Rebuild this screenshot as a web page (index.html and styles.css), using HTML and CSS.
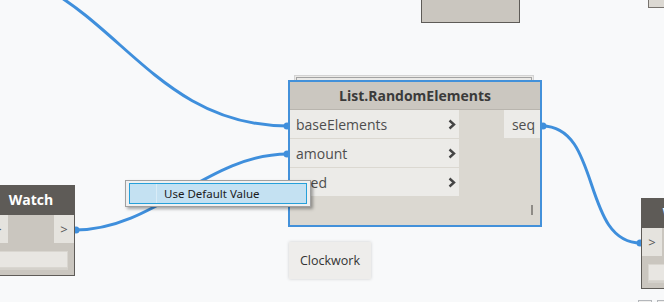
FILE: index.html
```html
<!DOCTYPE html>
<html lang="en">
<head>
    <meta charset="UTF-8">
    <meta name="viewport" content="width=device-width, initial-scale=1.0">
    <title>Workspace</title>
    <link rel="stylesheet" href="styles.css">
</head>
<body>
    <div class="canvas">
        <svg class="wires" width="664" height="302" viewBox="0 0 664 302">
            <path d="M-48 -36 C106 -36 134 126 288 126" />
            <path d="M75 230 C155 230 208 154 288 154" />
            <path d="M542 126 C602 126 581 243 641 243" />
            <circle cx="287" cy="126" r="3.5" />
            <circle cx="287" cy="154" r="3.5" />
            <circle cx="543" cy="126" r="3.5" />
            <circle cx="76" cy="230" r="3.5" />
            <circle cx="640" cy="243" r="3.5" />
        </svg>

        <!-- nodes cut by the view edges -->
        <div class="node-stub top-a"></div>
        <div class="node-stub top-b"></div>
        <div class="node-stub bottom-a"></div>
        <div class="node-stub bottom-b"></div>

        <div class="stack stack-1"></div>
        <div class="stack stack-2"></div>

        <div class="node random selected">
            <div class="node-title">List.RandomElements</div>
            <div class="node-ports">
                <div class="inputs">
                    <div class="port">
                        <span>baseElements</span>
                        <svg class="chevron" width="8" height="11" viewBox="0 0 8 11"><path d="M1.5 1.5 L6 5.5 L1.5 9.5" /></svg>
                    </div>
                    <div class="port">
                        <span>amount</span>
                        <svg class="chevron" width="8" height="11" viewBox="0 0 8 11"><path d="M1.5 1.5 L6 5.5 L1.5 9.5" /></svg>
                    </div>
                    <div class="port">
                        <span>seed</span>
                        <svg class="chevron" width="8" height="11" viewBox="0 0 8 11"><path d="M1.5 1.5 L6 5.5 L1.5 9.5" /></svg>
                    </div>
                </div>
                <div class="outputs">
                    <div class="port out">seq</div>
                </div>
            </div>
            <div class="lacing"></div>
        </div>

        <div class="node watch watch-left">
            <div class="watch-title">Watch</div>
            <div class="watch-row">
                <div class="watch-port">&gt;</div>
                <div class="watch-port">&gt;</div>
            </div>
            <div class="watch-box"></div>
        </div>

        <div class="node watch watch-right">
            <div class="watch-title">Watch</div>
            <div class="watch-row">
                <div class="watch-port">&gt;</div>
                <div class="watch-port">&gt;</div>
            </div>
            <div class="watch-box"></div>
        </div>

        <div class="group-label">Clockwork</div>

        <div class="context-menu">
            <div class="menu-item">
                <span class="menu-icon"></span>
                <span class="menu-text">Use Default Value</span>
            </div>
        </div>
    </div>
</body>
</html>
```

FILE: styles.css
```css
*, *::before, *::after {
    margin: 0;
    padding: 0;
    box-sizing: border-box;
}

body {
    font-family: "Open Sans", "Noto Sans", sans-serif;
    background-color: #f8f9fa;
    overflow: hidden;
}

.canvas {
    position: relative;
    width: 664px;
    height: 302px;
    overflow: hidden;
}

.wires {
    position: absolute;
    left: 0;
    top: 0;

    path {
        fill: none;
        stroke: #3f8fdc;
        stroke-width: 3;
    }

    circle {
        fill: #3f8fdc;
    }
}

.node-stub {
    position: absolute;
    background-color: #cac6bf;
    border: 1px solid #5e5b57;

    &.top-a {
        left: 421px;
        top: -10px;
        width: 99px;
        height: 33px;
    }

    &.top-b {
        left: 648px;
        top: -10px;
        width: 30px;
        height: 18px;
        background-color: #dcd9d3;
        border-color: #77736e;
    }

    &.bottom-a {
        left: 638px;
        top: 300px;
        width: 14px;
        height: 10px;
        background-color: #f0efed;
        border-color: #b4b7bb;
    }

    &.bottom-b {
        left: 657px;
        top: 300px;
        width: 14px;
        height: 10px;
        background-color: #f0efed;
        border-color: #b4b7bb;
    }
}

.stack {
    position: absolute;
    background-color: #ebeae7;
    border: 1px solid #b9b9b9;

    &.stack-1 {
        left: 294px;
        top: 75px;
        width: 240px;
        height: 20px;
        border-color: #d3d3d3;
    }

    &.stack-2 {
        left: 296px;
        top: 77px;
        width: 236px;
        height: 20px;
        border-color: #a3a3a3;
    }
}

.node {
    position: absolute;
}

.random {
    left: 288px;
    top: 80px;
    width: 254px;
    height: 147px;
    background-color: #dbd8d1;
    border: 2px solid #4391da;
    display: flex;
    flex-direction: column;

    .node-title {
        height: 28px;
        line-height: 28px;
        text-align: center;
        font-weight: 700;
        font-size: 14px;
        color: #3a3a3a;
        background-color: #cbc7c0;
        border-bottom: 1px solid #b9b5ae;
    }

    .node-ports {
        display: flex;
        justify-content: space-between;
    }

    .inputs {
        width: 169px;
        display: flex;
        flex-direction: column;
        gap: 1px;
    }

    .port {
        height: 28px;
        display: flex;
        align-items: center;
        justify-content: space-between;
        padding: 0 3px 0 6px;
        background-color: #ecebe8;
        font-size: 14px;
        color: #4e4e4e;

        &.out {
            width: 36px;
            padding: 0 5px 0 0;
            justify-content: flex-end;
        }
    }

    .chevron path {
        fill: none;
        stroke: #454545;
        stroke-width: 2.4;
    }

    .lacing {
        position: absolute;
        right: 7px;
        bottom: 10px;
        width: 2px;
        height: 10px;
        background-color: #8e8b86;
    }
}

.watch {
    width: 88px;
    height: 91px;
    background-color: #cac6bf;
    border: 1px solid #5e5b57;
    display: flex;
    flex-direction: column;

    &.watch-left {
        left: -13px;
        top: 185px;
    }

    &.watch-right {
        left: 641px;
        top: 198px;
    }

    .watch-title {
        height: 29px;
        line-height: 28px;
        text-align: center;
        font-weight: 700;
        font-size: 14px;
        color: #fff;
        background-color: #5e5b57;
    }

    .watch-row {
        height: 28px;
        display: flex;
        justify-content: space-between;
    }

    .watch-port {
        width: 20px;
        display: flex;
        align-items: center;
        justify-content: center;
        background-color: #e5e3de;
        font-size: 13px;
        color: #555;
    }

    .watch-box {
        margin: 8px 6px 0 6px;
        height: 17px;
        background-color: #e8e6e2;
        border: 1px solid #d9d6d0;
        box-shadow: 0 2px 0 #d4d1cb;
    }
}

.group-label {
    position: absolute;
    left: 289px;
    top: 242px;
    width: 82px;
    height: 37px;
    display: flex;
    align-items: center;
    justify-content: center;
    background-color: #eeedeb;
    box-shadow: 0 0 3px rgba(0, 0, 0, 0.18);
    font-size: 12.5px;
    color: #333;
}

.context-menu {
    position: absolute;
    left: 125px;
    top: 180px;
    width: 186px;
    height: 27px;
    padding: 2px 3px;
    background-color: #f0f0f0;
    border: 1px solid #a0a0a0;
    box-shadow: 2px 2px 3px rgba(0, 0, 0, 0.35);

    .menu-item {
        height: 21px;
        display: flex;
        align-items: center;
        background-color: #c4e1f2;
        border: 1px solid #26a0da;
    }

    .menu-icon {
        width: 27px;
        height: 100%;
        border-right: 1px solid #d9ecf7;
    }

    .menu-text {
        padding-left: 7px;
        font-family: "Noto Sans", "Open Sans", sans-serif;
        font-size: 11.5px;
        color: #1b1b1b;
    }
}
```
